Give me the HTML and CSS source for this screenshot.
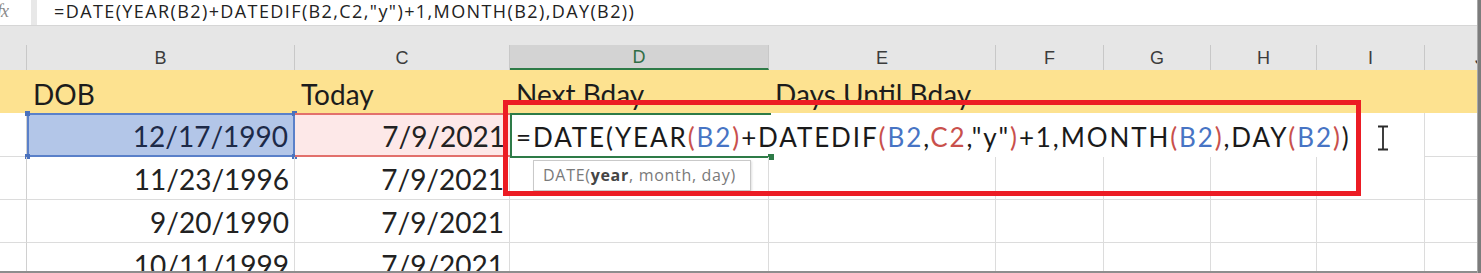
FILE: index.html
```html
<!DOCTYPE html>
<html>
<head>
<meta charset="utf-8">
<link rel="stylesheet" href="styles.css">
</head>
<body>
<div class="app">
  <div class="main">
    <div class="fbar">
      <div class="fx">fx</div>
      <div class="fsep"></div>
      <div class="finput">=DATE(YEAR(B2)+DATEDIF(B2,C2,"y")+1,MONTH(B2),DAY(B2))</div>
    </div>
    <div class="gap"></div>
    <div class="grid">
      <div class="ch corner"></div>
      <div class="ch">B</div>
      <div class="ch">C</div>
      <div class="ch active">D</div>
      <div class="ch">E</div>
      <div class="ch">F</div>
      <div class="ch">G</div>
      <div class="ch">H</div>
      <div class="ch">I</div>
      <div class="ch">J</div>

      <div class="hc"></div>
      <div class="hc">DOB</div>
      <div class="hc">Today</div>
      <div class="hc">Next Bday</div>
      <div class="hc">Days Until Bday</div>
      <div class="hc"></div>
      <div class="hc"></div>
      <div class="hc"></div>
      <div class="hc"></div>
      <div class="hc"></div>

      <div class="c rh"></div>
      <div class="c num sel-b">12/17/1990
        <span class="hd tl"></span><span class="hd tr"></span><span class="hd bl"></span><span class="hd br"></span>
      </div>
      <div class="c num sel-c">7/9/2021</div>
      <div class="c edit">
        <div class="editbox"></div>
        <span class="etext">=DATE(YEAR<span class="r">(</span><span class="b">B2</span><span class="r">)</span>+DATEDIF<span class="r">(</span><span class="b">B2</span>,<span class="r">C2</span>,"y"<span class="r">)</span>+1,MONTH<span class="r">(</span><span class="b">B2</span><span class="r">)</span>,DAY<span class="r">(</span><span class="b">B2</span><span class="r">)</span>)</span>
      </div>
      <div class="c"></div>

      <div class="c rh"></div>
      <div class="c num">11/23/1996</div>
      <div class="c num">7/9/2021</div>
      <div class="c"></div>
      <div class="c"></div>
      <div class="c"></div>
      <div class="c"></div>
      <div class="c"></div>
      <div class="c"></div>
      <div class="c"></div>

      <div class="c rh"></div>
      <div class="c num">9/20/1990</div>
      <div class="c num">7/9/2021</div>
      <div class="c"></div>
      <div class="c"></div>
      <div class="c"></div>
      <div class="c"></div>
      <div class="c"></div>
      <div class="c"></div>
      <div class="c"></div>

      <div class="c rh"></div>
      <div class="c num">10/11/1999</div>
      <div class="c num">7/9/2021</div>
      <div class="c"></div>
      <div class="c"></div>
      <div class="c"></div>
      <div class="c"></div>
      <div class="c"></div>
      <div class="c"></div>
      <div class="c"></div>
    </div>
    <div class="bottom"></div>

    <div class="tooltip">DATE(<b>year</b>, month, day)</div>
    <div class="redbox"></div>
    <svg class="ibeam" width="14" height="26" viewBox="0 0 14 26">
      <path d="M2 1.5 H12 M7 1.5 V24.5 M2 24.5 H12" stroke="#2b2b2b" stroke-width="1.8" fill="none"/>
    </svg>
  </div>
  <div class="edge"></div>
</div>
</body>
</html>
```

FILE: styles.css
```css
* { box-sizing: border-box; }
html, body { margin: 0; padding: 0; background: #ffffff; overflow: hidden; }
.app { display: flex; width: 1481px; height: 273px; }
.main { position: relative; width: 1477px; height: 273px; display: flex; flex-direction: column; }
.edge { width: 4px; height: 273px; background: #7c7c7c; border-left: 1px solid #a8a8a8; }

.fbar { height: 26px; display: flex; background: #ffffff; border-bottom: 1px solid #d6d6d6; }
.fx { width: 34px; font-family: "Liberation Serif", serif; font-style: italic; font-size: 18px; color: #8a8a8a; margin-left: -3px; padding-top: 1px; letter-spacing: -1px; }
.fsep { width: 6px; background: #e8e8e8; }
.finput { flex: 1; padding-left: 17px; font-family: "Open Sans", sans-serif; font-size: 18px; letter-spacing: 1.4px; line-height: 23px; color: #222; white-space: nowrap; }

.gap { height: 19px; background: #e6e6e6; }

.grid {
  display: grid;
  grid-template-columns: 27px 268px 215px 259px 227px 108px 107px 106px 108px 110px;
  grid-template-rows: 25px 43px 44px 43px 43px 43px;
  height: 226px;
  overflow: hidden;
  font-family: "Lato", "Liberation Sans", sans-serif;
}
.ch { background: #e6e6e6; border-right: 1px solid #c8c8c8; display: flex; align-items: center; justify-content: center; font-family: "Liberation Sans", sans-serif; font-size: 18px; color: #3c3c3c; padding-top: 1px; }
.ch.active { background: #d3d3d3; border-bottom: 2px solid #2e7b47; color: #2f6e45; }

.hc { background: #fde290; font-size: 28px; line-height: 28px; color: #1c1c1c; display: flex; align-items: flex-end; padding: 0 0 5px 6px; white-space: nowrap; overflow: visible; }

.c { border-right: 1px solid #dcdcdc; border-bottom: 1px solid #dcdcdc; font-size: 28px; line-height: 28px; color: #222; display: flex; align-items: flex-end; padding-bottom: 6px; white-space: nowrap; position: relative; }
.c.num { justify-content: flex-end; padding-right: 5px; }
.rh { border-right: 1px solid #d0d0d0; }

.sel-b { background: #b3c6e8; border: 2px solid #5a80c9; color: #1d2a48; padding-bottom: 5px; padding-right: 3px; }
.hd { position: absolute; width: 5px; height: 5px; background: #4b72bd; }
.hd.tl { left: -4px; top: -4px; }
.hd.tr { right: -4px; top: -4px; }
.hd.bl { left: -4px; bottom: -4px; }
.hd.br { right: -4px; bottom: -4px; }

.sel-c { background: #fde8e8; border-top: 2px solid #e2706c; border-bottom: 2px solid #e2706c; border-right: none; padding-right: 6px; padding-bottom: 5px; }

.edit { grid-column: 4 / 10; background: #ffffff; border-right: 1px solid #dcdcdc; border-bottom: none; padding: 0 0 0 6px; align-items: center; overflow: visible; }
.editbox { position: absolute; left: 0; top: 0; width: 261px; height: 45px; border: 2px solid #2e7b47; border-right: none; }
.editbox::after { content: ""; position: absolute; right: -3px; bottom: -4px; width: 6px; height: 6px; background: #2e7b47; }
.etext { font-size: 26px; letter-spacing: 1.9px; line-height: 26px; color: #1a1a1a; position: relative; top: 2px; }
.etext .b { color: #4774c4; }
.etext .r { color: #c9504c; }

.bottom { height: 2px; background: #8d8d8d; }

.tooltip { position: absolute; left: 533px; top: 160px; width: 218px; height: 31px; background: #ffffff; border: 1px solid #c9c9c9; box-shadow: 1px 1px 2px rgba(0,0,0,0.12); font-family: "Open Sans", sans-serif; font-size: 16px; letter-spacing: 0.7px; line-height: 28px; color: #7a7a7a; padding-left: 9px; white-space: nowrap; }
.tooltip b { color: #454545; font-weight: 700; }

.redbox { position: absolute; left: 503px; top: 100px; width: 858px; height: 96px; border: 5px solid #ec1c24; }

.ibeam { position: absolute; left: 1376px; top: 125px; }
```
